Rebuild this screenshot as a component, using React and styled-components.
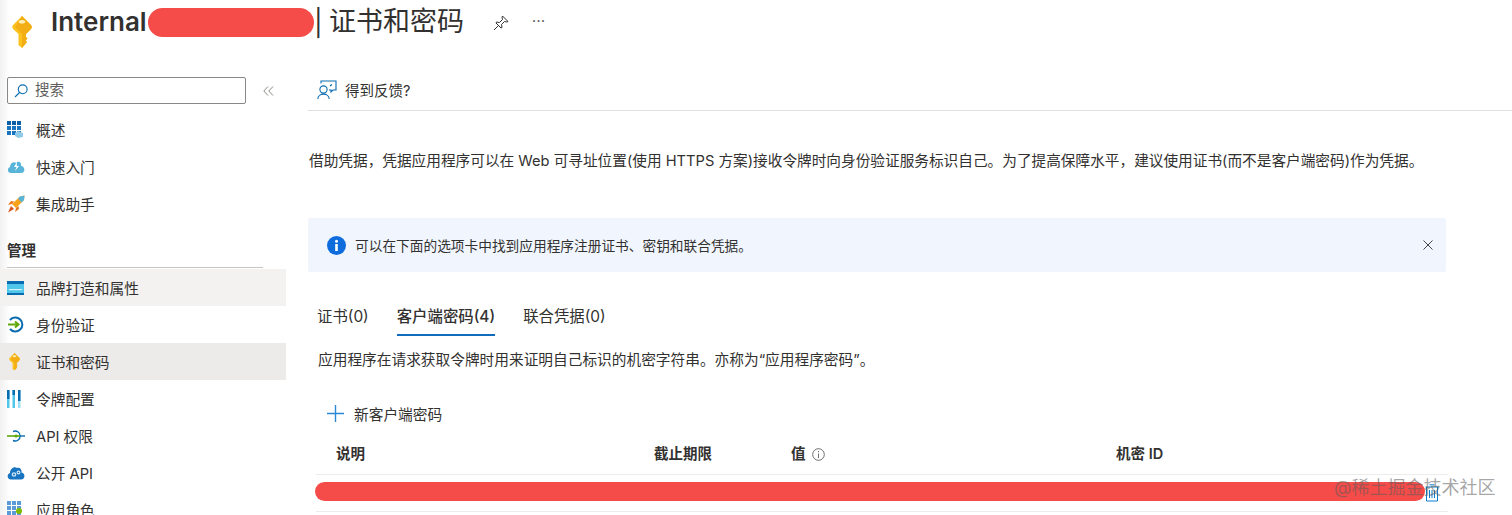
import React from "react";
import styled, { createGlobalStyle } from "styled-components";

const FONT = `Inter, "Noto Sans CJK SC", "Noto Sans", sans-serif`;

const GlobalStyle = createGlobalStyle`
  html, body { margin: 0; padding: 0; background: #ffffff; }
  body { font-family: ${FONT}; color: #323130; }
`;

const KeyIcon = ({ width = 20 }) => (
  <svg width={width} height={width * 1.6} viewBox="0 0 20 32">
    <path d="M10 0 L19 9 Q20.5 11 19 13 L14 18 V21 L15.5 22.5 L13.5 24.5 L15 26 L10 32 L6.5 29 V18 L1 13 Q-0.5 11 1 9 Z" fill="#fbc21d" />
    <path d="M10 0 L19 9 Q20.5 11 19 13 L14 18 V21 L15.5 22.5 L13.5 24.5 L15 26 L10 32 V18 L3 11 Z" fill="#f2ae14" />
    <ellipse cx="10" cy="5.8" rx="3.2" ry="1.8" fill="#fff0b8" />
  </svg>
);

const GridIcon = () => (
  <svg width="17" height="17" viewBox="0 0 17 17">
    {[0, 5, 10].map((y) =>
      [0, 5, 10].map((x) => <rect key={`${x}-${y}`} x={x} y={y} width="4" height="4" fill={y === 0 ? "#0a5ea8" : "#1873c0"} />)
    )}
    <path d="M11 10 L16 12 V16 L11 17 L8 15 V12 Z" fill="#8fcbe8" />
  </svg>
);

const CloudIcon = () => (
  <svg width="18" height="14" viewBox="0 0 18 14">
    <path d="M4 13 C0 13 0 8 3 7 C3 3 7 1 9 3 C12 0 15 3 14 6 C18 6 19 13 14 13 Z" fill="#59b4d9" />
    <path d="M10 2 L7 7 H9.5 L8 11 L12 6 H9.8 Z" fill="#ffffff" />
  </svg>
);

const RocketIcon = () => (
  <svg width="18" height="18" viewBox="0 0 18 18">
    <path d="M17.5 0.5 L17 5 L9 13 L5 9 L13 1.5 Z" fill="#f7a21b" />
    <path d="M17.5 0.5 L17 5 L14.5 7.5 L11 3.5 L13 1.5 Z" fill="#59b4d9" />
    <path d="M5 9 L1 10 L4 6 L7 6.5 Z M9 13 L8 17 L12 14 L11.5 11 Z" fill="#e8771f" />
    <path d="M4 11 L7 14 L1 17.5 Z" fill="#d9541e" />
  </svg>
);

const BrandIcon = () => (
  <svg width="17" height="14" viewBox="0 0 17 14">
    <rect width="17" height="14" fill="#0a6cb0" />
    <rect y="3" width="17" height="9" fill="#50c7ea" />
    <rect x="2" y="8" width="13" height="1.2" fill="#d5f3fb" />
  </svg>
);

const AuthIcon = () => (
  <svg width="17" height="17" viewBox="0 0 17 17" fill="none">
    <path d="M3 4 A7 7 0 1 1 3 13" stroke="#0a6cb0" strokeWidth="2" />
    <path d="M1 8.5 H11 M8 5.5 L11.5 8.5 L8 11.5" stroke="#5ea70d" strokeWidth="2" />
  </svg>
);

const TokenIcon = () => (
  <svg width="14" height="18" viewBox="0 0 14 18">
    <rect x="0" width="2.5" height="18" fill="#50c7ea" />
    <rect x="0" width="2.5" height="9" fill="#0a6cb0" />
    <rect x="5.5" width="2.5" height="18" fill="#50c7ea" />
    <rect x="5.5" width="2.5" height="5" fill="#0a6cb0" />
    <rect x="11" width="2.5" height="18" fill="#9cdff3" />
    <rect x="11" width="2.5" height="11" fill="#0a6cb0" />
  </svg>
);

const ApiIcon = () => (
  <svg width="18" height="12" viewBox="0 0 18 12" fill="none">
    <path d="M6 1.5 A5 5 0 1 1 6 10.5" stroke="#0a6cb0" strokeWidth="1.4" />
    <path d="M0 6 H13" stroke="#5ea70d" strokeWidth="1.6" />
    <path d="M13 6 H18" stroke="#0a6cb0" strokeWidth="1.4" />
    <circle cx="9" cy="6" r="1.6" fill="#5ea70d" />
  </svg>
);

const ExposeIcon = () => (
  <svg width="18" height="14" viewBox="0 0 18 14">
    <path d="M4 13.5 C0 13.5 -0.5 8 3 7 C3 3 7 0 10 2 C13 1 15 4 14.5 6.5 C18.5 7 18.5 13.5 14 13.5 Z" fill="#1873c0" />
    <circle cx="7" cy="8.5" r="2.3" fill="#cfe8f7" />
    <circle cx="11.5" cy="6.5" r="1.9" fill="#cfe8f7" />
    <circle cx="7" cy="8.5" r="1" fill="#1873c0" />
    <circle cx="11.5" cy="6.5" r="0.8" fill="#1873c0" />
  </svg>
);

const RolesIcon = () => (
  <svg width="17" height="17" viewBox="0 0 17 17">
    {[0, 5, 10].map((y) =>
      [0, 5, 10].map((x) => <rect key={`${x}-${y}`} x={x} y={y} width="4" height="4" fill="#5a9bd8" />)
    )}
    <circle cx="12" cy="10" r="3" fill="#7fba00" />
    <path d="M7 17 C7 13 17 13 17 17 Z" fill="#7fba00" />
  </svg>
);

const NAV_TOP = [
  { label: "概述", icon: <GridIcon /> },
  { label: "快速入门", icon: <CloudIcon /> },
  { label: "集成助手", icon: <RocketIcon /> },
];

const NAV_MANAGE = [
  { label: "品牌打造和属性", icon: <BrandIcon />, state: "hover" },
  { label: "身份验证", icon: <AuthIcon /> },
  { label: "证书和密码", icon: <KeyIcon width={11} />, state: "active", inset: 2 },
  { label: "令牌配置", icon: <TokenIcon /> },
  { label: "API 权限", icon: <ApiIcon /> },
  { label: "公开 API", icon: <ExposeIcon /> },
  { label: "应用角色", icon: <RolesIcon /> },
];

export default function App() {
  return (
    <Page>
      <GlobalStyle />
      <Header>
        <HeaderKey>
          <KeyIcon width={20} />
        </HeaderKey>
        <TitleLatin>Internal</TitleLatin>
        <TitleMask />
        <TitleBar>|</TitleBar>
        <TitleCjk>证书和密码</TitleCjk>
        <PinButton>
          <svg width="16" height="16" viewBox="0 0 16 16" fill="none" stroke="#323130" strokeWidth="1">
            <path d="M9.5 1 L15 6.5 L13.8 7 L11.5 6.5 L8.5 9.5 L9 12.5 L8 13 L3 8 L3.5 7 L6.5 7.5 L9.5 4.5 L9 2.2 Z M5.5 10.5 L1 15" />
          </svg>
        </PinButton>
        <MoreButton>···</MoreButton>
      </Header>
      <Body>
        <Sidebar>
          <SearchRow>
            <SearchBox>
              <svg width="14" height="14" viewBox="0 0 14 14" fill="none" stroke="#0a6cb0" strokeWidth="1.1">
                <circle cx="8.7" cy="5.3" r="4.4" />
                <path d="M5.5 8.5 L1 13" />
              </svg>
              <SearchText>搜索</SearchText>
            </SearchBox>
            <Collapse>
              <svg width="11" height="10" viewBox="0 0 11 10" fill="none" stroke="#8a8886" strokeWidth="1">
                <path d="M5 0.5 L0.8 5 L5 9.5 M10 0.5 L5.8 5 L10 9.5" />
              </svg>
            </Collapse>
          </SearchRow>
          <NavList>
            {NAV_TOP.map((item) => (
              <NavItem key={item.label}>
                <NavIcon>{item.icon}</NavIcon>
                {item.label}
              </NavItem>
            ))}
          </NavList>
          <SectionTitle>管理</SectionTitle>
          <SectionRule />
          <NavList>
            {NAV_MANAGE.map((item) => (
              <NavItem key={item.label} $state={item.state}>
                <NavIcon $inset={item.inset}>{item.icon}</NavIcon>
                {item.label}
              </NavItem>
            ))}
          </NavList>
        </Sidebar>
        <Main>
          <Toolbar>
            <svg width="20" height="20" viewBox="0 0 20 20" fill="none" stroke="#0a6cb0" strokeWidth="1.1">
              <path d="M4 3.5 V1 H19 V10 H16 L14 12 V10 H12" />
              <circle cx="6.5" cy="9.5" r="3.6" />
              <path d="M0.8 19 C1 12.5 12 12.5 12.2 19" />
              <path d="M13 6 L15 4.5" />
            </svg>
            <span>得到反馈?</span>
          </Toolbar>
          <Description>
            借助凭据，凭据应用程序可以在 Web 可寻址位置(使用 HTTPS 方案)接收令牌时向身份验证服务标识自己。为了提高保障水平，建议使用证书(而不是客户端密码)作为凭据。
          </Description>
          <Banner>
            <svg width="19" height="19" viewBox="0 0 19 19">
              <circle cx="9.5" cy="9.5" r="9.5" fill="#0f6cdc" />
              <rect x="8.2" y="8" width="2.6" height="7" fill="#ffffff" />
              <circle cx="9.5" cy="5.3" r="1.5" fill="#ffffff" />
            </svg>
            <BannerText>可以在下面的选项卡中找到应用程序注册证书、密钥和联合凭据。</BannerText>
            <svg width="10" height="10" viewBox="0 0 10 10" stroke="#323130" strokeWidth="0.9">
              <path d="M0.5 0.5 L9.5 9.5 M9.5 0.5 L0.5 9.5" />
            </svg>
          </Banner>
          <Tabs>
            <Tab>证书(0)</Tab>
            <Tab $active>客户端密码(4)</Tab>
            <Tab>联合凭据(0)</Tab>
          </Tabs>
          <TabNote>应用程序在请求获取令牌时用来证明自己标识的机密字符串。亦称为“应用程序密码”。</TabNote>
          <AddButton>
            <svg width="17" height="17" viewBox="0 0 17 17" stroke="#2b88d8" strokeWidth="1.4">
              <path d="M8.5 0 V17 M0 8.5 H17" />
            </svg>
            <span>新客户端密码</span>
          </AddButton>
          <TableHead>
            <HeadCell $width={318}>说明</HeadCell>
            <HeadCell $width={137}>截止期限</HeadCell>
            <HeadCell $width={325}>
              值
              <svg width="13" height="13" viewBox="0 0 13 13" fill="none" stroke="#605e5c" strokeWidth="0.9">
                <circle cx="6.5" cy="6.5" r="5.8" />
                <path d="M6.5 5.5 V10 M6.5 3 V4.2" />
              </svg>
            </HeadCell>
            <HeadCell>机密 ID</HeadCell>
          </TableHead>
          <TableRow>
            <RowMask />
            <TrashIcon width="14" height="18" viewBox="0 0 14 18" fill="none" stroke="#0a7fd0" strokeWidth="1">
              <path d="M0.5 3 H13.5 M1.5 3 V17 H12.5 V3 M4.5 0.8 H9.5 M4.5 6 V14 M7 6 V14 M9.5 6 V14" />
            </TrashIcon>
          </TableRow>
        </Main>
      </Body>
      <Watermark>@稀土掘金技术社区</Watermark>
    </Page>
  );
}

const Page = styled.div`
  position: relative;
  width: 1512px;
  height: 515px;
  overflow: hidden;
  background: linear-gradient(90deg, #f1f1f1 0, #ffffff 10px);
`;
const Header = styled.div`
  height: 45px;
  display: flex;
  align-items: flex-start;
  padding-left: 12px;
`;
const HeaderKey = styled.div`
  width: 39px;
  height: 48px;
  padding-top: 16px;
  box-sizing: border-box;
`;
const TitleLatin = styled.div`
  font-size: 26px;
  font-weight: 600;
  line-height: 30px;
  padding-top: 7px;
  color: #323130;
  width: 97px;
`;
const TitleMask = styled.div`
  width: 166px;
  height: 29px;
  margin-top: 8px;
  border-radius: 15px;
  background: #f54c49;
`;
const TitleBar = styled.div`
  font-size: 26px;
  line-height: 30px;
  padding-top: 8px;
  width: 15px;
`;
const TitleCjk = styled.div`
  font-size: 27px;
  line-height: 34px;
  padding-top: 5px;
  width: 135px;
  white-space: nowrap;
`;
const PinButton = styled.div`
  margin: 15px 0 0 29px;
  width: 16px;
  height: 16px;
`;
const MoreButton = styled.div`
  margin: 11px 0 0 23px;
  font-size: 14px;
  line-height: 20px;
  letter-spacing: 0.5px;
  color: #323130;
`;
const Body = styled.div`
  display: flex;
`;
const Sidebar = styled.div`
  width: 286px;
  flex: none;
  padding-top: 32px;
`;
const SearchRow = styled.div`
  display: flex;
  align-items: center;
  padding-left: 7px;
  margin-bottom: 7px;
`;
const SearchBox = styled.div`
  width: 239px;
  height: 27px;
  box-sizing: border-box;
  display: flex;
  align-items: center;
  gap: 7px;
  padding-left: 6px;
  border: 1px solid #8a8886;
  border-radius: 2px;
`;
const SearchText = styled.span`
  font-size: 14.5px;
  line-height: 20px;
  margin-top: -2px;
  color: #605e5c;
`;
const Collapse = styled.div`
  margin-left: 17px;
  display: flex;
`;
const NavList = styled.div`
  display: flex;
  flex-direction: column;
`;
const NavItem = styled.div`
  height: 37px;
  display: flex;
  align-items: center;
  font-size: 14.7px;
  white-space: nowrap;
  color: #323130;
  background: ${(p) =>
    p.$state === "active" ? "#edebe9" : p.$state === "hover" ? "#f3f2f1" : "transparent"};
`;
const NavIcon = styled.div`
  width: 36px;
  padding-left: ${(p) => 7 + (p.$inset || 0)}px;
  box-sizing: border-box;
  flex: none;
  display: flex;
  align-items: center;
  justify-content: flex-start;
  height: 20px;
`;
const SectionTitle = styled.div`
  margin: 20px 0 0 7px;
  height: 18px;
  line-height: 18px;
  font-size: 14.5px;
  font-weight: 600;
`;
const SectionRule = styled.div`
  height: 1px;
  width: 256px;
  margin: 7px 0 1px 7px;
  background: #c8c6c4;
`;
const Main = styled.div`
  width: 1204px;
  margin-left: 22px;
  margin-top: 27px;
  display: flex;
  flex-direction: column;
`;
const Toolbar = styled.div`
  height: 39px;
  box-sizing: border-box;
  display: flex;
  align-items: center;
  gap: 8px;
  padding: 0 0 3px 9px;
  border-bottom: 1px solid #dfdfdf;
  font-size: 14.5px;
  color: #323130;
`;
const Description = styled.div`
  margin: 40px 0 0 1px;
  height: 20px;
  line-height: 20px;
  font-size: 14.67px;
  white-space: nowrap;
  color: #323130;
`;
const Banner = styled.div`
  width: 1138px;
  height: 54px;
  margin-top: 47px;
  box-sizing: border-box;
  display: flex;
  align-items: center;
  gap: 9px;
  padding: 0 13px 0 19px;
  border-radius: 2px;
  background: #f1f6fe;
`;
const BannerText = styled.div`
  flex: 1;
  font-size: 13.7px;
  color: #323130;
`;
const Tabs = styled.div`
  display: flex;
  gap: 28px;
  margin: 26px 0 0 9px;
`;
const Tab = styled.div`
  height: 38px;
  box-sizing: border-box;
  padding-top: 9px;
  line-height: 20px;
  font-size: 15.4px;
  font-weight: ${(p) => (p.$active ? 500 : 400)};
  color: #323130;
  border-bottom: 2px solid ${(p) => (p.$active ? "#0f6cbd" : "transparent")};
  white-space: nowrap;
`;
const TabNote = styled.div`
  margin: 14px 0 0 10px;
  height: 20px;
  line-height: 20px;
  font-size: 14.7px;
  white-space: nowrap;
  color: #323130;
`;
const AddButton = styled.div`
  margin: 33px 0 0 19px;
  height: 20px;
  display: flex;
  align-items: center;
  gap: 10px;
  font-size: 14.7px;
  color: #323130;
`;
const TableHead = styled.div`
  width: 1132px;
  height: 42px;
  margin: 10px 0 0 8px;
  box-sizing: border-box;
  padding: 11px 0 0 20px;
  display: flex;
  align-items: flex-start;
  border-bottom: 1px solid #ececec;
`;
const HeadCell = styled.div`
  width: ${(p) => (p.$width ? `${p.$width}px` : "auto")};
  flex: none;
  display: flex;
  align-items: center;
  gap: 6px;
  line-height: 20px;
  font-size: 14.5px;
  font-weight: 600;
  color: #323130;
`;
const TableRow = styled.div`
  width: 1132px;
  height: 37px;
  margin-left: 8px;
  box-sizing: border-box;
  padding-top: 7px;
  display: flex;
  align-items: flex-start;
  border-bottom: 1px solid #ececec;
`;
const RowMask = styled.div`
  width: 1110px;
  height: 19px;
  margin-left: -1px;
  border-radius: 10px;
  background: #f54c49;
`;
const TrashIcon = styled.svg`
  margin-top: 2px;
`;
const Watermark = styled.div`
  position: absolute;
  left: 1334px;
  top: 477px;
  font-size: 18px;
  line-height: 22px;
  color: rgba(90, 90, 90, 0.55);
  white-space: nowrap;
`;
